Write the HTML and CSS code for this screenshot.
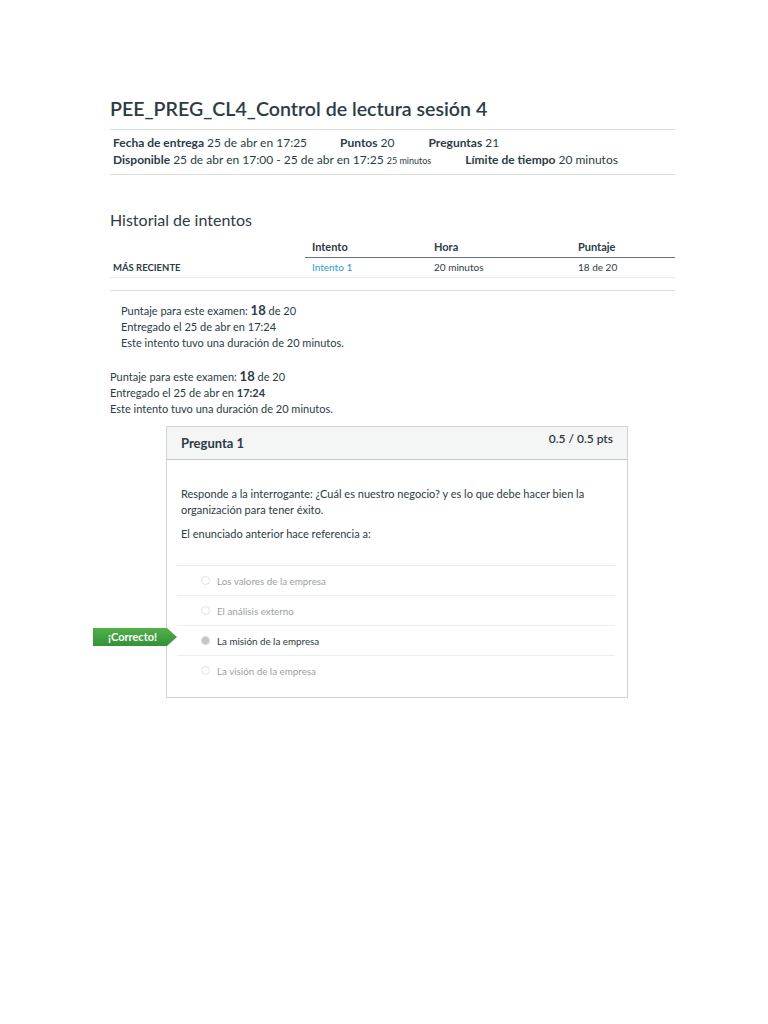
FILE: index.html
```html
<!DOCTYPE html>
<html lang="es">
<head>
  <meta charset="UTF-8" />
  <meta name="viewport" content="width=device-width, initial-scale=1.0"/>
  <title>PEE_PREG_CL4_Control de lectura sesión 4</title>
  <link rel="stylesheet" href="styles.css">
</head>
<body>
  <main class="page">
    <h1 class="quiz-title">PEE_PREG_CL4_Control de lectura sesión 4</h1>
    <div class="quiz-details">
      <ul class="details-row">
        <li><b>Fecha de entrega</b> 25 de abr en 17:25</li>
        <li><b>Puntos</b> 20</li>
        <li><b>Preguntas</b> 21</li>
      </ul>
      <ul class="details-row">
        <li><b>Disponible</b> 25 de abr en 17:00 - 25 de abr en 17:25 <small>25 minutos</small></li>
        <li><b>Límite de tiempo</b> 20 minutos</li>
      </ul>
    </div>

    <h2 class="history-title">Historial de intentos</h2>
    <div class="history">
      <div class="history-head">
        <span></span>
        <span class="th">Intento</span>
        <span class="th">Hora</span>
        <span class="th">Puntaje</span>
      </div>
      <div class="history-row">
        <span class="latest">MÁS RECIENTE</span>
        <a href="#" class="attempt-link">Intento 1</a>
        <span>20 minutos</span>
        <span>18 de 20</span>
      </div>
    </div>

    <div class="score-info indented">
      <div>Puntaje para este examen: <strong>18</strong> de 20</div>
      <div>Entregado el 25 de abr en 17:24</div>
      <div>Este intento tuvo una duración de 20 minutos.</div>
    </div>

    <div class="score-info">
      <div>Puntaje para este examen: <strong>18</strong> de 20</div>
      <div>Entregado el 25 de abr en <b>17:24</b></div>
      <div>Este intento tuvo una duración de 20 minutos.</div>
    </div>

    <section class="question">
      <div class="question-header">
        <span class="question-name">Pregunta 1</span>
        <span class="question-points">0.5 / 0.5 pts</span>
      </div>
      <div class="question-body">
        <p>Responde a la interrogante: ¿Cuál es nuestro negocio? y es lo que debe hacer bien la organización para tener éxito.</p>
        <p>El enunciado anterior hace referencia a:</p>
        <div class="answers">
          <div class="answer"><span class="radio"></span>Los valores de la empresa</div>
          <div class="answer"><span class="radio"></span>El análisis externo</div>
          <div class="answer selected">
            <span class="correct-flag">¡Correcto!</span>
            <span class="radio"></span>La misión de la empresa
          </div>
          <div class="answer"><span class="radio"></span>La visión de la empresa</div>
        </div>
      </div>
    </section>
  </main>
</body>
</html>
```

FILE: styles.css
```css
body {
  margin: 0;
  font-family: Lato, "Open Sans", sans-serif;
  color: #2d3b45;
  background-color: #fff;
}
.page {
  width: 565px;
  margin-left: 110px;
  padding-top: 96px;
}
.quiz-title {
  font-size: 19.6px;
  font-weight: 600;
  line-height: 26px;
  margin: 0 0 7px 0;
}
.quiz-details {
  border-top: 1px solid #dcdcdc;
  border-bottom: 1px solid #dcdcdc;
  padding: 4px 0 5px 3px;
}
.details-row {
  list-style: none;
  margin: 0;
  padding: 0;
  display: flex;
  gap: 33px;
  font-size: 12px;
  line-height: 17px;
}
.details-row li:last-child {
  margin-left: 1px;
}
.details-row b {
  font-weight: 700;
}
.details-row small {
  font-size: 9px;
}
.history-title {
  font-size: 16px;
  font-weight: 400;
  line-height: 20px;
  margin: 35px 0 6px 0;
}
.history {
  font-size: 10px;
  border-bottom: 1px solid #dcdcdc;
  padding-bottom: 12px;
}
.history-head,
.history-row {
  display: grid;
  grid-template-columns: 195px 122px 144px 104px;
}
.history-head span,
.history-row > * {
  padding-left: 7px;
}
.history-head .th {
  font-size: 11px;
  font-weight: 700;
  line-height: 21px;
  border-bottom: 1px solid #66737c;
}
.history-row {
  line-height: 19px;
  border-bottom: 1px solid #ececec;
}
.history-row .latest {
  padding-left: 3px;
  font-weight: 700;
  font-size: 9.5px;
}
.attempt-link {
  color: #2d9bdb;
  text-decoration: none;
}
.score-info {
  font-size: 11px;
  line-height: 16px;
  margin-top: 18px;
}
.score-info > div {
  height: 16px;
}
.score-info strong {
  font-size: 13px;
  font-weight: 700;
  line-height: 14px;
}
.score-info b {
  font-weight: 700;
}
.score-info.indented {
  padding-left: 11px;
  margin-top: 12px;
}
.question {
  margin: 9px 0 0 56px;
  width: 460px;
  border: 1px solid #d3d3d3;
}
.question-header {
  display: flex;
  justify-content: space-between;
  background-color: #f4f5f5;
  border-bottom: 1px solid #c8c8c8;
  height: 32px;
  padding: 0 14px;
}
.question-name {
  font-size: 13px;
  font-weight: 700;
  line-height: 32px;
}
.question-points {
  font-size: 12px;
  font-weight: 600;
  line-height: 24px;
}
.question-body {
  padding: 26px 14px 12px 14px;
  font-size: 11px;
  line-height: 16px;
}
.question-body p {
  margin: 0 0 8px 0;
}
.answers {
  margin: 23px 0 0 -4px;
  width: 438px;
}
.answer {
  position: relative;
  display: flex;
  align-items: center;
  height: 29px;
  border-top: 1px solid #ececec;
  padding-left: 24px;
  font-size: 9.8px;
  color: #9aa1a6;
}
.answer.selected {
  color: #2d3b45;
}
.radio {
  width: 7px;
  height: 7px;
  border: 1px solid #dfe2e4;
  border-radius: 50%;
  margin-right: 7px;
  background-color: #fff;
}
.answer.selected .radio {
  background-color: #c3c6c8;
  border-color: #d8dadb;
}
.correct-flag {
  position: absolute;
  left: -84px;
  top: 2px;
  height: 18px;
  width: 69px;
  padding-left: 15px;
  line-height: 18px;
  font-size: 11px;
  font-weight: 700;
  color: #fff;
  background: linear-gradient(#52b148, #33913a);
  clip-path: polygon(0 0, 88% 0, 100% 50%, 88% 100%, 0 100%);
}
```
